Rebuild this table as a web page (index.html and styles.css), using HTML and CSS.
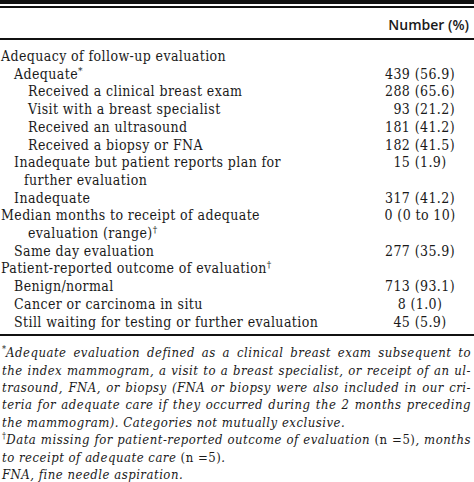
FILE: index.html
```html
<!DOCTYPE html>
<html>
<head>
<meta charset="utf-8">
<link rel="stylesheet" href="styles.css">
</head>
<body>
<div class="page">
  <div class="toprule"></div>
  <table class="tbl">
    <colgroup><col class="c-lab"><col class="c-num"></colgroup>
    <thead>
      <tr><th class="lab"></th><th class="num">Number (%)</th></tr>
    </thead>
    <tbody>
      <tr class="first"><td class="lab l0">Adequacy of follow-up evaluation</td><td class="num"></td></tr>
      <tr><td class="lab l1">Adequate<sup>*</sup></td><td class="num">439 (56.9)</td></tr>
      <tr><td class="lab l2">Received a clinical breast exam</td><td class="num">288 (65.6)</td></tr>
      <tr><td class="lab l2">Visit with a breast specialist</td><td class="num">&#8199;93 (21.2)</td></tr>
      <tr><td class="lab l2">Received an ultrasound</td><td class="num">181 (41.2)</td></tr>
      <tr><td class="lab l2">Received a biopsy or FNA</td><td class="num">182 (41.5)</td></tr>
      <tr><td class="lab l1w">Inadequate but patient reports plan for<br>further evaluation</td><td class="num">15 (1.9)</td></tr>
      <tr><td class="lab l1">Inadequate</td><td class="num">317 (41.2)</td></tr>
      <tr><td class="lab l0w">Median months to receipt of adequate<br>evaluation (range)<sup>†</sup></td><td class="num">0 (0 to 10)</td></tr>
      <tr><td class="lab l1">Same day evaluation</td><td class="num">277 (35.9)</td></tr>
      <tr><td class="lab l0">Patient-reported outcome of evaluation<sup>†</sup></td><td class="num"></td></tr>
      <tr><td class="lab l1">Benign/normal</td><td class="num">713 (93.1)</td></tr>
      <tr><td class="lab l1">Cancer or carcinoma in situ</td><td class="num">8 (1.0)</td></tr>
      <tr class="last"><td class="lab l1">Still waiting for testing or further evaluation</td><td class="num">45 (5.9)</td></tr>
    </tbody>
  </table>
  <div class="notes">
    <p class="full"><sup class="mk">*</sup>Adequate evaluation defined as a clinical breast exam subsequent to</p>
    <p class="full">the index mammogram, a visit to a breast specialist, or receipt of an ul-</p>
    <p class="full">trasound, FNA, or biopsy (FNA or biopsy were also included in our cri-</p>
    <p class="full">teria for adequate care if they occurred during the 2 months preceding</p>
    <p>the mammogram). Categories not mutually exclusive.</p>
    <p class="full"><sup class="mk">†</sup>Data missing for patient-reported outcome of evaluation <span class="up">(n =5)</span>, months</p>
    <p>to receipt of adequate care <span class="up">(n =5)</span>.</p>
    <p>FNA, fine needle aspiration.</p>
  </div>
</div>
</body>
</html>
```

FILE: styles.css
```css
html, body {
  margin: 0;
  padding: 0;
  background: #ffffff;
}
.page {
  width: 474px;
  color: #1a1a1a;
  font-family: "DejaVu Serif", serif;
  font-stretch: semi-condensed;
}
.toprule {
  height: 4px;
  background: #111;
  border-bottom: 2px solid #fff;
}
.tbl {
  width: 474px;
  table-layout: fixed;
  border-collapse: collapse;
  border-top: 2px solid #111;
  border-bottom: 2px solid #111;
}
.c-lab { width: 370px; }
.c-num { width: 104px; }
.tbl thead th {
  height: 28px;
  padding: 0;
  border-bottom: 2px solid #111;
  font-family: "Open Sans", sans-serif;
  font-stretch: normal;
  font-weight: 600;
  font-size: 14px;
  vertical-align: middle;
}
.tbl thead th.num {
  text-align: right;
  padding-right: 5px;
  padding-top: 2px;
}
.tbl td {
  padding: 0;
  font-size: 14px;
  line-height: 17.7px;
  letter-spacing: 0.4px;
  vertical-align: top;
  white-space: nowrap;
}
.tbl tr.first td { padding-top: 8px; }
.tbl tr.last td { padding-bottom: 3px; }
.tbl td.num {
  text-align: center;
  padding-right: 4px;
}
.lab.l0 { padding-left: 1px; }
.lab.l1 { padding-left: 14px; }
.lab.l2 { padding-left: 28px; }
.lab.l1w { padding-left: 24px; text-indent: -10px; }
.lab.l0w { padding-left: 28px; text-indent: -27px; }
sup {
  font-size: 10px;
  line-height: 0;
  vertical-align: 5px;
}
.notes {
  padding: 8px 3px 0 2px;
  font-style: italic;
  font-size: 13px;
  line-height: 17.4px;
  letter-spacing: 0.5px;
}
.notes p {
  margin: 0;
  white-space: nowrap;
}
.notes p.full {
  text-align: justify;
  text-align-last: justify;
  white-space: normal;
}
.notes .mk {
  font-style: normal;
  font-size: 9px;
  letter-spacing: 0;
}
.notes .up { font-style: normal; }
```
